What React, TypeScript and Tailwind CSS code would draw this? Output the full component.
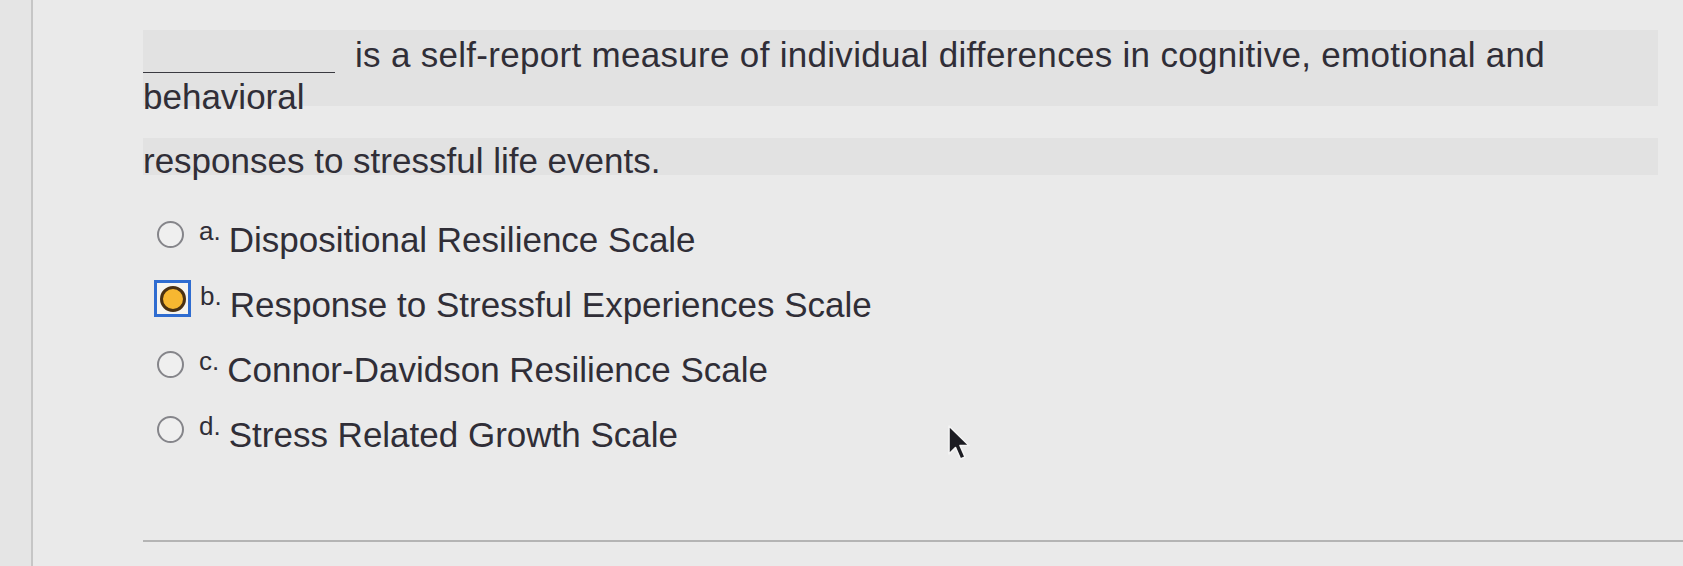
import React from 'react';

const options = [
  { key: 'a.', label: 'Dispositional Resilience Scale', selected: false },
  { key: 'b.', label: 'Response to Stressful Experiences Scale', selected: true },
  { key: 'c.', label: 'Connor-Davidson Resilience Scale', selected: false },
  { key: 'd.', label: 'Stress Related Growth Scale', selected: false },
];

const Radio: React.FC<{ selected: boolean }> = ({ selected }) => {
  if (selected) {
    // focused + checked radio: blue square focus ring around an orange dot
    return (
      <div className="ml-[11px] mr-[-6px] -mt-[4px] flex h-[37px] w-[37px] shrink-0 items-center justify-center border-[3px] border-[#2f6cd0] bg-[#f6f4ef]">
        <div className="h-[26px] w-[26px] rounded-full border-[3px] border-[#4a3113] bg-[#f7b731]" />
      </div>
    );
  }
  return (
    <div className="ml-[14px] mt-[2px] h-[27px] w-[27px] shrink-0 rounded-full border-2 border-[#85858a] bg-[#efefef]" />
  );
};

const Cursor: React.FC = () => (
  <svg className="absolute left-[947px] top-[424px]" width="26" height="40" viewBox="0 0 26 40">
    <path
      d="M2 2 L2 30 L8.5 23.5 L13.5 35 L18 33 L13 21.5 L22 21.5 Z"
      fill="#1c1c22"
      stroke="#f4f4f4"
      strokeWidth="1.6"
      strokeLinejoin="round"
    />
  </svg>
);

export default function App() {
  return (
    <div className="relative flex h-[566px] w-[1683px] overflow-hidden bg-[#eaeaea] font-['Liberation_Sans',Arial,sans-serif] text-[#302e37]">
      {/* left gutter */}
      <div className="w-[33px] shrink-0 border-r-2 border-[#c6c6c6] bg-[#e5e5e5]" />

      <div className="flex flex-1 flex-col pl-[110px] pt-[30px]">
        {/* question text */}
        <div className="mr-[25px] h-[76px] bg-[#e2e2e2] pt-[4px] text-[35px] leading-[42px]">
          <span className="relative top-[6px] mr-[20px] inline-block h-[1.5px] w-[192px] bg-[#3a3a40]" />
          <span className="tracking-[0.3px]">
            is a self-report measure of individual differences in cognitive, emotional and
          </span>
          <br />
          behavioral
        </div>
        <div className="mr-[25px] mt-[32px] h-[37px] bg-[#e2e2e2] pt-[2px] text-[35px] leading-[42px]">
          responses to stressful life events.
        </div>

        {/* answers */}
        <div className="mt-[44px] flex flex-col">
          {options.map((o) => (
            <div key={o.key} className="flex h-[65px] items-start">
              <Radio selected={o.selected} />
              <span className="ml-[15px] -mt-[3px] text-[26px] leading-[30px]">{o.key}</span>
              <span className="ml-[8px] text-[35px] leading-[42px]">{o.label}</span>
            </div>
          ))}
        </div>

        <div className="mt-[61px] h-[2px] bg-[#b4b4b4]" />
      </div>

      <Cursor />
    </div>
  );
}
